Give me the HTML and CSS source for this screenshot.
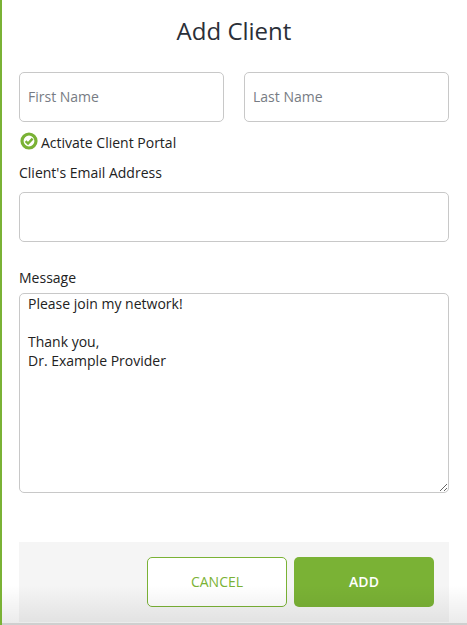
FILE: index.html
```html
<!DOCTYPE html>
<html lang="en">
<head>
  <meta charset="UTF-8">
  <title>Add Client</title>
  <link rel="stylesheet" href="styles.css">
</head>
<body>

  <div class="modal">
    <h1>Add Client</h1>

    <div class="name-row">
      <input type="text" class="field" placeholder="First Name">
      <input type="text" class="field" placeholder="Last Name">
    </div>

    <div class="portal-row">
      <svg class="check-icon" width="18" height="18" viewBox="0 0 18 18">
        <circle cx="9" cy="9" r="7" fill="none" stroke="#7ab235" stroke-width="3.2"/>
        <path d="M5.6 9.2 L8 11.5 L12.6 6.6" fill="none" stroke="#7ab235" stroke-width="2.4"/>
      </svg>
      <span>Activate Client Portal</span>
    </div>

    <label class="email-label">Client's Email Address</label>
    <input type="text" class="field email-field">

    <label class="message-label">Message</label>
    <textarea class="message-box">Please join my network!

Thank you,
Dr. Example Provider</textarea>

    <div class="footer">
      <button class="cancel-btn">CANCEL</button>
      <button class="add-btn">ADD</button>
    </div>
  </div>

</body>
</html>
```

FILE: styles.css
```css
html, body {
  margin: 0;
  height: 625px;
  overflow: hidden;
}

body {
  font-family: "Open Sans", "Liberation Sans", sans-serif;
  font-size: 14px;
  color: #222;
  background-color: white;
  border-left: 2px solid #7ab235;
  box-sizing: border-box;
  position: relative;
}

/* grey fade along the bottom edge of the window */
body::after {
  content: "";
  position: absolute;
  left: 0;
  right: 0;
  bottom: 0;
  height: 40px;
  background: linear-gradient(rgba(0, 0, 0, 0), rgba(0, 0, 0, 0.08));
  border-bottom: 2px solid #cfcfcf;
  box-sizing: border-box;
  pointer-events: none;
}

.modal {
  display: flex;
  flex-direction: column;
  padding: 0 18px 0 17px;
}

h1 {
  margin: 14px 0 0;
  font-size: 24px;
  line-height: 34px;
  font-weight: 400;
  color: #2b2f38;
  text-align: center;
}

.field {
  box-sizing: border-box;
  height: 50px;
  padding: 0 8px 2px;
  border: 1px solid #c8c8c8;
  border-radius: 5px;
  font-family: inherit;
  font-size: 14px;
  outline: none;
}

.field::placeholder {
  color: #777c84;
  opacity: 1;
}

.name-row {
  display: flex;
  gap: 20px;
  margin-top: 24px;
}

.name-row .field {
  flex: 1;
  min-width: 0;
}

.portal-row {
  display: flex;
  align-items: center;
  gap: 3px;
  height: 20px;
  margin-top: 10px;
  padding-left: 1px;
}

.check-icon {
  flex: none;
  margin-top: -2px;
}

.email-label {
  line-height: 20px;
  margin-top: 11px;
}

.email-field {
  margin-top: 9px;
}

.message-label {
  line-height: 20px;
  margin-top: 26px;
}

.message-box {
  box-sizing: border-box;
  height: 200px;
  margin-top: 5px;
  padding: 0 8px;
  border: 1px solid #c8c8c8;
  border-radius: 5px;
  font-family: inherit;
  font-size: 14px;
  line-height: 19px;
  color: #222;
  outline: none;
}

.footer {
  display: flex;
  justify-content: flex-end;
  gap: 7px;
  margin-top: 49px;
  padding: 15px;
  height: 80px;
  box-sizing: border-box;
  background-color: #f5f5f5;
}

button {
  width: 140px;
  height: 50px;
  padding: 0 0 2px;
  border-radius: 5px;
  font-family: inherit;
  font-size: 14px;
  cursor: pointer;
}

.cancel-btn {
  background-color: white;
  color: #7ab235;
  border: 1px solid #7ab235;
  font-weight: 400;
}

.add-btn {
  background-color: #7ab235;
  color: white;
  border: none;
  font-weight: 600;
}
```
